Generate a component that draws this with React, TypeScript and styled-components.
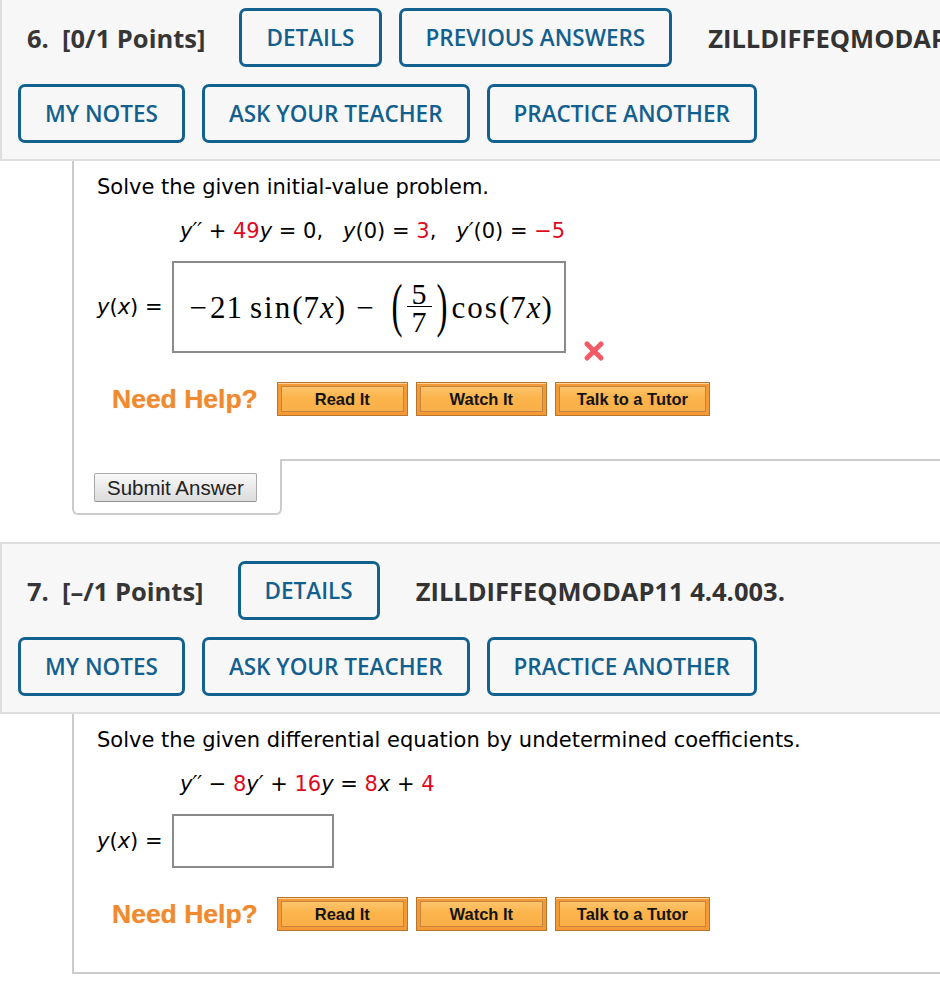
import React from 'react';
import styled, { createGlobalStyle } from 'styled-components';

const GlobalStyle = createGlobalStyle`
  html, body {
    margin: 0;
    padding: 0;
    background: #ffffff;
    overflow: hidden;
  }
`;

const Page = styled.div`
  width: 1100px;
  margin-top: -11px;
`;

const Question = styled.section<{ $gap?: number }>`
  margin-top: ${(p) => p.$gap ?? 0}px;
`;

const Header = styled.header`
  background: #f7f7f7;
  border: 2px solid #dedede;
  border-right: none;
  padding: 17px 0 16px 16px;
  display: flex;
  flex-direction: column;
  gap: 17px;
`;

const HeaderRow = styled.div`
  display: flex;
  align-items: center;
  gap: 17px;
`;

const Title = styled.h2`
  margin: 0 17px 0 9px;
  flex-shrink: 0;
  font-family: "Open Sans", sans-serif;
  font-weight: 700;
  font-size: 25.5px;
  color: #363636;
  white-space: nowrap;
`;

const Code = styled.span`
  margin-left: 19px;
  flex-shrink: 0;
  font-family: "Open Sans", sans-serif;
  font-weight: 700;
  font-size: 25.5px;
  color: #333333;
  white-space: nowrap;
`;

const OutlineButton = styled.button`
  flex-shrink: 0;
  height: 59px;
  box-sizing: border-box;
  padding: 0 24px;
  border: 3px solid #12618f;
  border-radius: 7px;
  background: transparent;
  font-family: "Open Sans", sans-serif;
  font-weight: 600;
  font-size: 22.5px;
  color: #135f8e;
  white-space: nowrap;
`;

const Body = styled.div<{ $tabbed?: boolean }>`
  margin-left: 72px;
  border-left: 2px solid #cccccc;
  border-bottom: ${(p) => (p.$tabbed ? 'none' : '2px solid #cccccc')};
  padding: 14px 0 ${(p) => (p.$tabbed ? 43 : 41)}px 23px;
  font-family: "DejaVu Sans", Verdana, sans-serif;
  font-size: 21px;
  line-height: 24px;
  color: #000000;
`;

const Prompt = styled.p`
  margin: 0;
`;

const Equation = styled.div`
  margin: 20px 0 0 83px;
  white-space: pre;
`;

const Red = styled.span`
  color: #de0a1e;
`;

const AnswerRow = styled.div`
  margin-top: 18px;
  display: flex;
  align-items: center;
`;

const Label = styled.span`
  margin-right: 9px;
  white-space: nowrap;
`;

const AnswerBox = styled.div<{ $w: number; $h: number }>`
  width: ${(p) => p.$w}px;
  height: ${(p) => p.$h}px;
  box-sizing: border-box;
  border: 2px solid #8a8a8a;
  background: #ffffff;
  display: flex;
  align-items: center;
  padding-left: 16px;
`;

const MathLine = styled.div`
  display: flex;
  align-items: center;
  font-family: "Liberation Serif", "Times New Roman", serif;
  font-size: 31px;
  line-height: 1;
  white-space: pre;
`;

const MathGroup = styled.span<{ $ml?: number }>`
  margin-left: ${(p) => p.$ml ?? 0}px;
  letter-spacing: 1px;
`;

const Fn = styled.span`
  letter-spacing: 2px;
`;

const Bin = styled.span`
  margin: 0 13px 0 10px;
`;

const BigParen = styled.span`
  display: inline-block;
  font-size: 60px;
  line-height: 1;
  transform: scaleX(0.55);
  margin-top: -4px;
`;

const Frac = styled.span`
  display: inline-flex;
  flex-direction: column;
  align-items: center;
  font-size: 30px;
  line-height: 23px;
`;

const Num = styled.span`
  padding: 0 5px 1px;
  border-bottom: 1.5px solid #000;
`;

const Den = styled.span`
  padding: 3px 5px 0;
`;

const WrongMark = styled.svg`
  align-self: flex-end;
  margin: 0 0 -9px 17px;
`;

const HelpRow = styled.div`
  margin: 29px 0 0 15px;
  display: flex;
  align-items: center;
  gap: 8px;
`;

const NeedHelp = styled.span`
  margin-right: 11px;
  font-family: "Liberation Sans", Arial, sans-serif;
  font-weight: 700;
  font-size: 26.5px;
  line-height: 30px;
  color: #f08a30;
  text-shadow: 0 0 1px rgba(240, 138, 48, 0.6);
  white-space: nowrap;
`;

const HelpButton = styled.button`
  min-width: 131px;
  height: 34px;
  box-sizing: border-box;
  padding: 3px;
  display: flex;
  border: 1px solid #b8742c;
  background: #f39a37;
  box-shadow: inset 0 1px 0 #fcd39a;
`;

const HelpFace = styled.span`
  flex: 1;
  display: flex;
  align-items: center;
  justify-content: center;
  padding: 0 17px;
  border: 1px solid #c4843f;
  background: linear-gradient(#fdc46c 0%, #fbb44b 45%, #faaf48 100%);
  font-family: "Liberation Sans", Arial, sans-serif;
  font-weight: 700;
  font-size: 16.5px;
  color: #141414;
  white-space: nowrap;
`;

const Footer = styled.div`
  margin-left: 72px;
  display: flex;
  align-items: flex-start;
`;

const SubmitTab = styled.div`
  width: 210px;
  box-sizing: border-box;
  border: 2px solid #cccccc;
  border-top: none;
  border-radius: 0 0 6px 6px;
  padding: 14px 0 11px 20px;
`;

const Filler = styled.div`
  flex: 1;
  border-top: 2px solid #cccccc;
`;

const SubmitButton = styled.button`
  height: 29px;
  box-sizing: border-box;
  padding: 0 12px;
  font-family: "Liberation Sans", Arial, sans-serif;
  font-size: 20.5px;
  color: #222222;
  background: linear-gradient(#f8f8f8, #dcdcdc);
  border: 1px solid #a8a8a8;
  border-bottom-color: #909090;
  border-radius: 2px;
`;

const HelpButtons = () => (
  <HelpRow>
    <NeedHelp>Need Help?</NeedHelp>
    <HelpButton><HelpFace>Read It</HelpFace></HelpButton>
    <HelpButton><HelpFace>Watch It</HelpFace></HelpButton>
    <HelpButton><HelpFace>Talk to a Tutor</HelpFace></HelpButton>
  </HelpRow>
);

const Cross = () => (
  <WrongMark width="22" height="22" viewBox="0 0 22 22">
    <g stroke="#f25a66" strokeWidth="5" strokeLinecap="round">
      <line x1="4" y1="4" x2="18" y2="18" />
      <line x1="18" y1="4" x2="4" y2="18" />
    </g>
  </WrongMark>
);

export default function App() {
  return (
    <Page>
      <GlobalStyle />

      <Question>
        <Header>
          <HeaderRow>
            <Title>6.&nbsp; [0/1 Points]</Title>
            <OutlineButton>DETAILS</OutlineButton>
            <OutlineButton>PREVIOUS ANSWERS</OutlineButton>
            <Code>ZILLDIFFEQMODAP11 4.4.002.</Code>
          </HeaderRow>
          <HeaderRow>
            <OutlineButton>MY NOTES</OutlineButton>
            <OutlineButton>ASK YOUR TEACHER</OutlineButton>
            <OutlineButton>PRACTICE ANOTHER</OutlineButton>
          </HeaderRow>
        </Header>
        <Body $tabbed>
          <Prompt>Solve the given initial-value problem.</Prompt>
          <Equation>
            <i>y′′</i> + <Red>49</Red><i>y</i> = 0,   <i>y</i>(0) = <Red>3</Red>,   <i>y′</i>(0) = <Red>−5</Red>
          </Equation>
          <AnswerRow>
            <Label><i>y</i>(<i>x</i>) =</Label>
            <AnswerBox $w={394} $h={92}>
              <MathLine>
                <span>−</span>
                <MathGroup $ml={3}>21</MathGroup>
                <MathGroup $ml={7}><Fn>sin</Fn>(7<i>x</i>)</MathGroup>
                <Bin>−</Bin>
                <BigParen>(</BigParen>
                <Frac>
                  <Num>5</Num>
                  <Den>7</Den>
                </Frac>
                <BigParen>)</BigParen>
                <MathGroup><Fn>cos</Fn>(7<i>x</i>)</MathGroup>
              </MathLine>
            </AnswerBox>
            <Cross />
          </AnswerRow>
          <HelpButtons />
        </Body>
        <Footer>
          <SubmitTab>
            <SubmitButton>Submit Answer</SubmitButton>
          </SubmitTab>
          <Filler />
        </Footer>
      </Question>

      <Question $gap={27}>
        <Header>
          <HeaderRow>
            <Title>7.&nbsp; [–/1 Points]</Title>
            <OutlineButton>DETAILS</OutlineButton>
            <Code>ZILLDIFFEQMODAP11 4.4.003.</Code>
          </HeaderRow>
          <HeaderRow>
            <OutlineButton>MY NOTES</OutlineButton>
            <OutlineButton>ASK YOUR TEACHER</OutlineButton>
            <OutlineButton>PRACTICE ANOTHER</OutlineButton>
          </HeaderRow>
        </Header>
        <Body>
          <Prompt>Solve the given differential equation by undetermined coefficients.</Prompt>
          <Equation>
            <i>y′′</i> − <Red>8</Red><i>y′</i> + <Red>16</Red><i>y</i> = <Red>8</Red><i>x</i> + <Red>4</Red>
          </Equation>
          <AnswerRow>
            <Label><i>y</i>(<i>x</i>) =</Label>
            <AnswerBox $w={162} $h={54} />
          </AnswerRow>
          <HelpButtons />
        </Body>
      </Question>
    </Page>
  );
}
